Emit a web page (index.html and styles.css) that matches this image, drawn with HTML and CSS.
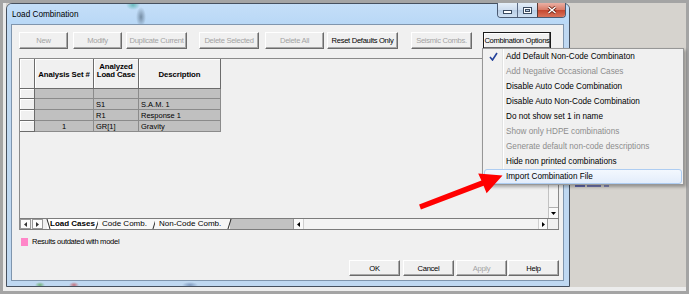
FILE: index.html
```html
<!DOCTYPE html>
<html>
<head>
<meta charset="utf-8">
<title>Load Combination</title>
<link rel="stylesheet" href="styles.css">
</head>
<body>
<div class="screen">
  <div class="window">
    <div class="titlebar">
      <span class="title">Load Combination</span>
      <div class="caps">
        <span class="cap cap-min"><svg width="9" height="4" viewBox="0 0 9 4"><rect x="0.5" y="0.5" width="8" height="3" fill="#fff" stroke="#3a4a60"/></svg></span>
        <span class="cap cap-max"><svg width="9" height="7" viewBox="0 0 9 7"><rect x="0.5" y="0.5" width="8" height="6" fill="none" stroke="#3a4a60"/><rect x="1.5" y="1.5" width="6" height="4" fill="none" stroke="#fff"/><rect x="2.5" y="2.5" width="4" height="2" fill="none" stroke="#3a4a60"/></svg></span>
        <span class="cap cap-close"><svg width="10" height="8" viewBox="0 0 10 8"><path d="M1.5 1 L8.5 7 M8.5 1 L1.5 7" stroke="#6a2518" stroke-width="3"/><path d="M1.5 1 L8.5 7 M8.5 1 L1.5 7" stroke="#fff" stroke-width="1.5"/></svg></span>
      </div>
    </div>
    <div class="client">
      <div class="toolbar">
        <span class="btn dis w-new">New</span>
        <span class="btn dis w-mod">Modify</span>
        <span class="btn dis w-dup">Duplicate Current</span>
        <span class="btn dis w-dsel">Delete Selected</span>
        <span class="btn dis w-dall">Delete All</span>
        <span class="btn w-reset">Reset Defaults Only</span>
        <span class="btn dis w-seis">Seismic Combs.</span>
        <span class="btn focus w-opt">Combination Options</span>
      </div>
      <div class="gridbox">
        <div class="gridmain">
          <div class="cells">
            <table class="grid">
              <tr class="hdr">
                <th class="c-rh"></th>
                <th class="c-set">Analysis Set #</th>
                <th class="c-alc">Analyzed<br>Load Case</th>
                <th class="c-desc">Description</th>
              </tr>
              <tr class="r1"><td class="rh"></td><td></td><td></td><td></td></tr>
              <tr><td class="rh"></td><td></td><td>S1</td><td>S.A.M. 1</td></tr>
              <tr><td class="rh"></td><td></td><td>R1</td><td>Response 1</td></tr>
              <tr><td class="rh"></td><td class="num">1</td><td>GR[1]</td><td>Gravity</td></tr>
            </table>
          </div>
          <div class="vscroll">
            <span class="sb-btn v"><svg width="5" height="3" viewBox="0 0 5 3"><path d="M0 0 H5 L2.5 3 Z" fill="#000"/></svg></span>
          </div>
        </div>
        <div class="hbar">
          <div class="tabnav">
            <span class="nb"><svg width="3" height="5" viewBox="0 0 3 5"><path d="M3 0 V5 L0 2.5 Z" fill="#333"/></svg></span>
            <span class="nb"><svg width="3" height="5" viewBox="0 0 3 5"><path d="M0 0 V5 L3 2.5 Z" fill="#333"/></svg></span>
          </div>
          <div class="tabs">
            <span class="tab active t-load">Load Cases</span>
            <span class="tab t-code">Code Comb.</span>
            <span class="tab t-non">Non-Code Comb.</span>
          </div>
          <div class="hfill"></div>
          <span class="sb-btn h"><svg width="3" height="5" viewBox="0 0 3 5"><path d="M3 0 V5 L0 2.5 Z" fill="#000"/></svg></span>
          <div class="htrack"></div>
          <span class="sb-btn h hr"><svg width="3" height="5" viewBox="0 0 3 5"><path d="M0 0 V5 L3 2.5 Z" fill="#000"/></svg></span>
          <div class="corner"></div>
        </div>
      </div>
      <div class="legend">
        <span class="swatch"></span>
        <span class="legend-text">Results outdated with model</span>
      </div>
      <div class="footer">
        <span class="btn fb">OK</span>
        <span class="btn fb fb-cancel">Cancel</span>
        <span class="btn fb dis fb-apply">Apply</span>
        <span class="btn fb fb-help">Help</span>
      </div>
    </div>
  </div>

  <div class="desk-blur"></div>

  <div class="menu">
    <div class="mi"><span class="gut"><svg width="9" height="9" viewBox="0 0 9 9"><path d="M1 5 L3.5 8 L8 1" fill="none" stroke="#22409a" stroke-width="1.6"/></svg></span><span class="mt">Add Default Non-Code Combinaton</span></div>
    <div class="mi dis"><span class="gut"></span><span class="mt">Add Negative Occasional Cases</span></div>
    <div class="mi"><span class="gut"></span><span class="mt">Disable Auto Code Combination</span></div>
    <div class="mi"><span class="gut"></span><span class="mt">Disable Auto Non-Code Combination</span></div>
    <div class="mi"><span class="gut"></span><span class="mt">Do not show set 1 in name</span></div>
    <div class="mi dis"><span class="gut"></span><span class="mt">Show only HDPE combinations</span></div>
    <div class="mi dis"><span class="gut"></span><span class="mt">Generate default non-code descriptions</span></div>
    <div class="mi"><span class="gut"></span><span class="mt">Hide non printed combinations</span></div>
    <div class="mi hl"><span class="gut"></span><span class="mt">Import Combination File</span></div>
  </div>

  <svg class="arrow" width="95" height="45" viewBox="414 168 95 45">
    <polygon points="419.1,204.4 481.4,180.4 478.2,173.4 502.5,175.6 486.6,193.2 483.6,185.8 420.9,209.6" fill="#ff0000"/>
  </svg>
</div>
</body>
</html>
```

FILE: styles.css
```css
* { box-sizing: border-box; margin: 0; padding: 0; }

html, body {
  width: 689px;
  height: 294px;
  overflow: hidden;
}

body {
  font-family: "Liberation Sans", Arial, sans-serif;
  font-size: 8px;
  color: #000;
  background: #a4a4a4;
}

.screen {
  position: relative;
  width: 689px;
  height: 294px;
  border: 3px solid #a4a4a4;
  padding-left: 3px;
  background:
    linear-gradient(0deg, #ececec 4px, transparent 4px),
    linear-gradient(90deg, #e9e9e9 3px, #d6d3ce 3px);
  display: flex;
  align-items: flex-start;
}

/* ---------- window ---------- */
.window {
  width: 564px;
  height: 284px;
  border: 1px solid #46505e;
  border-radius: 6px 6px 0 0;
  background:
    radial-gradient(5px 3px at 33px 281px, rgba(60,150,40,.6), transparent),
    radial-gradient(5px 3px at 67px 281px, rgba(200,40,40,.6), transparent),
    radial-gradient(8px 3px at 183px 281px, rgba(60,90,140,.5), transparent),
    #bfd8f1;
  display: flex;
  flex-direction: column;
}

.titlebar {
  height: 20px;
  display: flex;
  align-items: flex-start;
  padding-left: 5px;
  border-radius: 5px 5px 0 0;
  background:
    radial-gradient(5px 10px at 134px 13px, rgba(70,90,110,.6), transparent),
    radial-gradient(7px 5px at 126px 1px, rgba(30,160,140,.55), transparent),
    linear-gradient(#c4def8, #b9d8f6);
}

.title {
  font-size: 8.2px;
  line-height: 20px;
  padding-top: 1px;
  color: #000;
}

.caps {
  margin-left: auto;
  margin-right: 3px;
  margin-top: -1px;
  height: 15px;
  display: flex;
  border: 1px solid #4a5a72;
  border-top: none;
  border-radius: 0 0 4px 4px;
  overflow: hidden;
}

.cap {
  height: 14px;
  display: flex;
  align-items: center;
  justify-content: center;
}

.cap-min {
  width: 19px;
  align-items: flex-end;
  padding-bottom: 3px;
  background: linear-gradient(#e4eef9, #cddcee 50%, #b7cce4 50%, #cfe0f2);
}

.cap-max {
  width: 20px;
  border-left: 1px solid #5a6a84;
  background: linear-gradient(#e4eef9, #cddcee 50%, #b7cce4 50%, #cfe0f2);
}

.cap-close {
  width: 28px;
  border-left: 1px solid #5a3a34;
  background: linear-gradient(#eab0a4, #d87a66 50%, #c4452e 50%, #d9735a);
}

.client {
  margin: 0 5px 0 4px;
  height: 257px;
  border: 1px solid #7f95ad;
  background: #f0f0f0;
  display: flex;
  flex-direction: column;
  padding: 7px 4px 0 7px;
}

/* ---------- buttons ---------- */
.toolbar {
  display: flex;
  height: 17px;
}

.btn {
  height: 17px;
  display: flex;
  align-items: center;
  justify-content: center;
  white-space: nowrap;
  font-size: 7.6px;
  letter-spacing: -0.3px;
  background: #f0f0f0;
  border: 1px solid;
  border-color: #ffffff #6b6b6b #6b6b6b #ffffff;
  box-shadow: inset -1px -1px 0 #a8a8a8;
  color: #000;
}

.btn.dis { color: #a3a3a3; }

.btn.focus {
  border: 1px solid #1a1a1a;
  box-shadow: inset -1px -1px 0 #6b6b6b, inset 1px 1px 0 #ffffff;
}

.w-new   { width: 49px; }
.w-mod   { width: 49px; margin-left: 5px; }
.w-dup   { width: 61px; margin-left: 4px; }
.w-dsel  { width: 60px; margin-left: 12px; }
.w-dall  { width: 59px; margin-left: 6px; }
.w-reset { width: 71px; margin-left: 3px; }
.w-seis  { width: 61px; margin-left: 13px; }
.w-opt   { width: 68px; margin-left: 11px; }

/* ---------- grid ---------- */
.gridbox {
  margin-top: 9px;
  width: 540px;
  height: 172px;
  border-left: 1px solid #8a8a8a;
  display: flex;
  flex-direction: column;
}

.gridmain {
  height: 160px;
  border-top: 1px solid #8a8a8a;
  display: flex;
}

.cells {
  flex: 1;
  background: #f0f0f0;
}

.grid {
  border-collapse: separate;
  border-spacing: 0;
  table-layout: fixed;
  width: 201px;
}

.grid tr.hdr { height: 30px; }
.grid tr { height: 11px; }
.grid tr.r1 { height: 10px; }

.grid th {
  background: #f0f0f0;
  border-right: 1px solid #6b6b6b;
  border-bottom: 1px solid #6b6b6b;
  box-shadow: inset 1px 1px 0 #ffffff;
  font-weight: bold;
  font-size: 7.8px;
  letter-spacing: -0.1px;
  line-height: 8px;
  vertical-align: bottom;
  text-align: center;
  padding: 0 0 9px;
  white-space: nowrap;
}

.c-rh   { width: 15px; }
.c-set  { width: 59px; }
.c-alc  { width: 45px; }
.c-desc { width: 82px; }

.grid td {
  background: #c0c0c0;
  border-right: 1px solid #8b8b8b;
  border-bottom: 1px solid #8b8b8b;
  font-size: 7.5px;
  line-height: 9px;
  padding: 0 2px;
  white-space: nowrap;
  overflow: hidden;
  vertical-align: middle;
}

.grid td.rh {
  background: #f0f0f0;
  border-right-color: #6b6b6b;
  border-bottom-color: #6b6b6b;
  box-shadow: inset 1px 1px 0 #ffffff;
}

.grid td.num { text-align: center; }

.vscroll {
  width: 11px;
  display: flex;
  flex-direction: column;
  justify-content: flex-end;
  background: #f4f4f4;
  border-left: 1px solid #c2c2c2;
  border-right: 1px solid #8a8a8a;
}

.sb-btn {
  display: flex;
  align-items: center;
  justify-content: center;
  background: #fafafa;
}

.sb-btn.v {
  height: 11px;
  border-top: 1px solid #b0b0b0;
}

.hbar {
  height: 12px;
  border-top: 1px solid #7c7c7c;
  border-bottom: 1px solid #7c7c7c;
  background: #c2c2c2;
  display: flex;
}

.tabnav {
  width: 27px;
  display: flex;
  background: #f0f0f0;
}

.nb {
  width: 11px;
  height: 10px;
  border: 1px solid #9a9a9a;
  background: #fcfcfc;
  display: flex;
  align-items: center;
  justify-content: center;
}

.nb + .nb { margin-left: 1px; }

.tabs {
  display: flex;
  width: 183px;
}

.tab {
  position: relative;
  height: 10px;
  line-height: 10px;
  font-size: 8px;
  padding-left: 4px;
  background: #f7f7f7;
  white-space: nowrap;
}

.tab.active {
  background: #ffffff;
  font-weight: bold;
  padding-left: 3px;
}

.tab::after {
  content: "";
  position: absolute;
  right: 0;
  top: 0;
  width: 1px;
  height: 10px;
  background: #2a2a2a;
  transform: skewX(-17deg);
}

.tab.active::before {
  content: "";
  position: absolute;
  left: 1px;
  top: 0;
  width: 1px;
  height: 10px;
  background: #2a2a2a;
  transform: skewX(17deg);
}

.t-load { width: 51px; }
.t-code { width: 57px; }
.t-non  { width: 75px; }

.hfill {
  width: 63px;
  background: #c2c2c2;
}

.sb-btn.h {
  width: 11px;
  height: 10px;
  border-left: 1px solid #9a9a9a;
  border-right: 1px solid #cfcfcf;
}

.sb-btn.hr {
  width: 10px;
  border-left: 1px solid #cfcfcf;
  border-right: 1px solid #9a9a9a;
}

.htrack {
  flex: 1;
  background: #f4f4f4;
}

.corner {
  width: 11px;
  background: #f0f0f0;
  border-right: 1px solid #8a8a8a;
}

/* ---------- legend ---------- */
.legend {
  margin-top: 8px;
  height: 8px;
  display: flex;
  align-items: center;
}

.swatch {
  width: 7px;
  height: 8px;
  margin-left: 2px;
  background: #ff86c8;
}

.legend-text {
  margin-left: 4px;
  font-size: 7.6px;
  letter-spacing: -0.3px;
  line-height: 8px;
}

/* ---------- footer ---------- */
.footer {
  margin-top: 14px;
  display: flex;
  justify-content: flex-end;
}

.fb { width: 51px; height: 16px; }
.fb-cancel { margin-left: 3px; }
.fb-apply  { margin-left: 2px; }
.fb-help   { margin-left: 1px; }

/* ---------- desktop behind ---------- */
.desk-blur {
  position: absolute;
  left: 572px;
  top: 180px;
  width: 34px;
  height: 4px;
  background: linear-gradient(90deg, rgba(50,60,160,.7) 0 10px, transparent 10px 12px, rgba(50,60,160,.6) 12px 26px, transparent 26px 29px, rgba(50,60,160,.5) 29px);
  filter: blur(0.6px);
}

/* ---------- popup menu ---------- */
.menu {
  position: absolute;
  left: 479px;
  top: 45px;
  width: 202px;
  border: 1px solid #979797;
  background:
    linear-gradient(90deg, #f1f1f1 19px, #e2e3e3 19px, #e2e3e3 20px, #ffffff 20px, #ffffff 21px, #f0f0f0 21px);
  box-shadow: 2px 2px 3px rgba(0,0,0,.3);
  font-size: 8.2px;
}

.mi {
  height: 15px;
  margin: 0 1px;
  border: 1px solid transparent;
  border-radius: 3px;
  display: flex;
  align-items: center;
  white-space: nowrap;
}

.mi.dis { color: #8d8d8d; }

.mi.hl {
  border-color: #aecdf2;
  background: linear-gradient(#f3f8fe, #e3edfb);
}

.gut {
  width: 17px;
  display: flex;
  justify-content: center;
  align-items: center;
}

.mt { margin-left: 4px; }

/* ---------- annotation ---------- */
.arrow {
  position: absolute;
  left: 411px;
  top: 165px;
}
```
